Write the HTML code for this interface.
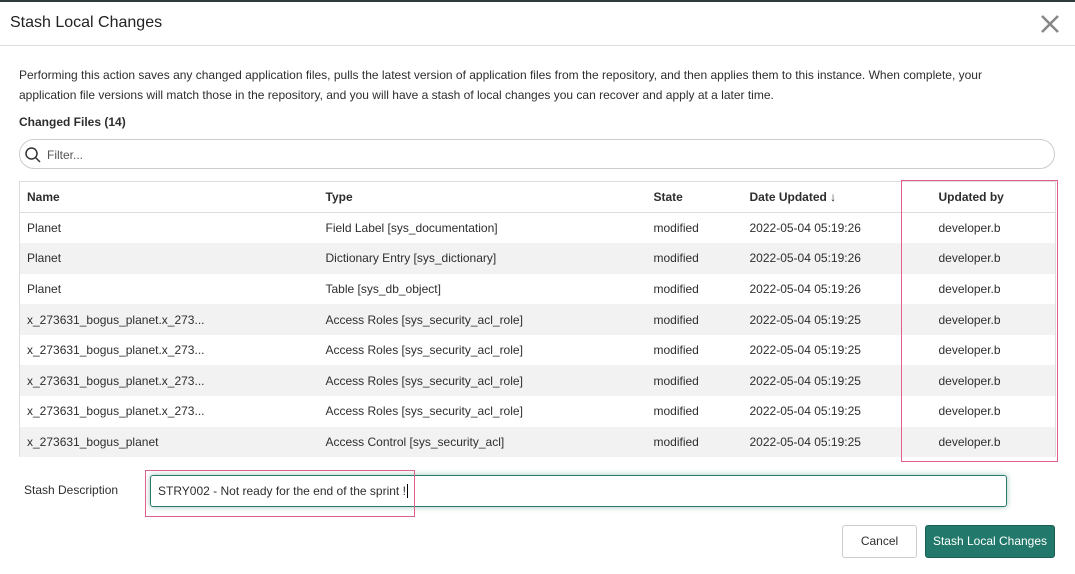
<!DOCTYPE html>
<html><head><style>
*{box-sizing:border-box;margin:0;padding:0}
body{width:1075px;height:574px;background:#fff;font-family:"Liberation Sans",sans-serif;color:#2e2e2e;position:relative;overflow:hidden;font-size:12px}
.abs{position:absolute;white-space:nowrap}
.topline{position:absolute;left:0;top:0;width:1075px;height:2px;background:#2f3b3b}
.hdr{position:absolute;left:0;top:45px;width:1075px;height:1px;background:#ddd}
table{position:absolute;left:19px;top:181px;width:1036px;border-collapse:collapse;border-left:1px solid #ddd;border-right:1px solid #ddd;table-layout:fixed}
td,th{height:30.6px;text-align:left;font-weight:normal;padding:0 0 0 7px;white-space:nowrap;font-size:12px;overflow:hidden}
th{font-weight:bold;border-top:1px solid #ddd;border-bottom:1px solid #ddd;height:31px}
tr.g td{background:#f2f2f2}
td:last-child,th:last-child{padding-left:37px}
.pink{position:absolute;border:1px solid #e0608c}
</style></head><body>
<div class="topline"></div>
<div class="abs" style="left:10px;top:14px;font-size:16px;color:#222">Stash Local Changes</div>
<svg class="abs" style="left:1040px;top:14px" width="20" height="20" viewBox="0 0 20 20"><path d="M2 2L18 18M18 2L2 18" stroke="#888" stroke-width="2.6"/></svg>
<div class="hdr"></div>
<div class="abs" style="left:19px;top:65px;line-height:20px">Performing this action saves any changed application files, pulls the latest version of application files from the repository, and then applies them to this instance. When complete, your<br>application file versions will match those in the repository, and you will have a stash of local changes you can recover and apply at a later time.</div>
<div class="abs" style="left:19px;top:115px;font-weight:bold">Changed Files (14)</div>
<div class="abs" style="left:19px;top:139px;width:1036px;height:30px;border:1px solid #ccc;border-radius:15px"></div>
<svg class="abs" style="left:24px;top:146px" width="18" height="18" viewBox="0 0 18 18"><circle cx="7.5" cy="7.5" r="5.5" fill="none" stroke="#333" stroke-width="1.5"/><path d="M11.5 11.5L16 16" stroke="#333" stroke-width="1.5"/></svg>
<div class="abs" style="left:47px;top:148px;color:#555">Filter...</div>
<table>
<colgroup><col style="width:299px"><col style="width:328px"><col style="width:96px"><col style="width:159px"><col style="width:154px"></colgroup>
<tr><th>Name</th><th>Type</th><th>State</th><th>Date Updated ↓</th><th>Updated by</th></tr>
<tr><td>Planet</td><td>Field Label [sys_documentation]</td><td>modified</td><td>2022-05-04 05:19:26</td><td>developer.b</td></tr>
<tr class="g"><td>Planet</td><td>Dictionary Entry [sys_dictionary]</td><td>modified</td><td>2022-05-04 05:19:26</td><td>developer.b</td></tr>
<tr><td>Planet</td><td>Table [sys_db_object]</td><td>modified</td><td>2022-05-04 05:19:26</td><td>developer.b</td></tr>
<tr class="g"><td>x_273631_bogus_planet.x_273...</td><td>Access Roles [sys_security_acl_role]</td><td>modified</td><td>2022-05-04 05:19:25</td><td>developer.b</td></tr>
<tr><td>x_273631_bogus_planet.x_273...</td><td>Access Roles [sys_security_acl_role]</td><td>modified</td><td>2022-05-04 05:19:25</td><td>developer.b</td></tr>
<tr class="g"><td>x_273631_bogus_planet.x_273...</td><td>Access Roles [sys_security_acl_role]</td><td>modified</td><td>2022-05-04 05:19:25</td><td>developer.b</td></tr>
<tr><td>x_273631_bogus_planet.x_273...</td><td>Access Roles [sys_security_acl_role]</td><td>modified</td><td>2022-05-04 05:19:25</td><td>developer.b</td></tr>
<tr class="g"><td>x_273631_bogus_planet</td><td>Access Control [sys_security_acl]</td><td>modified</td><td>2022-05-04 05:19:25</td><td>developer.b</td></tr>
</table>
<div class="pink" style="left:901px;top:180px;width:157px;height:282px"></div>
<div class="abs" style="left:24px;top:483px">Stash Description</div>
<div class="abs" style="left:150px;top:475px;width:857px;height:32px;border:1px solid #2a7a6c;border-radius:3px;box-shadow:0 0 6px rgba(42,122,108,.45)"></div>
<div class="abs" style="left:158px;top:484px">STRY002 - Not ready for the end of the sprint !<span style="border-left:1px solid #000;margin-left:1px"></span></div>
<div class="pink" style="left:145px;top:470px;width:270px;height:47px"></div>
<div class="abs" style="left:842px;top:525px;width:75px;height:33px;border:1px solid #ccc;border-radius:3px;text-align:center;line-height:31px">Cancel</div>
<div class="abs" style="left:925px;top:525px;width:130px;height:33px;background:#22796b;border:1px solid #1b5f54;border-radius:3px;color:#fff;text-align:center;line-height:31px">Stash Local Changes</div>
</body></html>
